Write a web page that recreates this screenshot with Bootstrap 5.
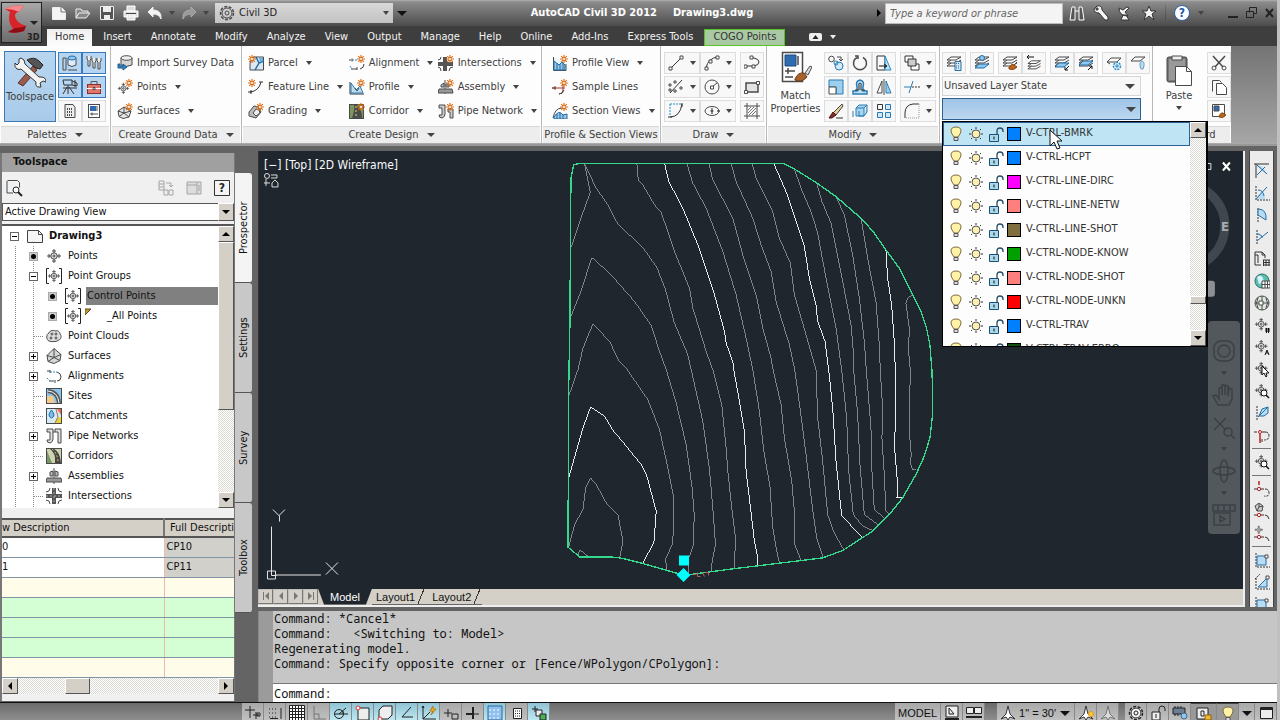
<!DOCTYPE html>
<html lang="en">
<head>
<meta charset="utf-8">
<meta name="viewport" content="width=device-width, initial-scale=1">
<title>AutoCAD Civil 3D 2012 - Drawing3.dwg</title>
<link href="https://cdn.jsdelivr.net/npm/bootstrap@5.3.0/dist/css/bootstrap.min.css" rel="stylesheet">
<style>
  :root { --edge:#646464; --canvas:#1f262e; --ink:#404040; --blue:#b5d5f3; }
  body { font:11px/16px "DejaVu Sans Condensed","DejaVu Sans",sans-serif; color:#111; background:var(--edge); }
  button, select, input { font:inherit; color:inherit; border:0; padding:0; background:none; border-radius:0; }
  svg { display:block; flex:none; }
  .ic { width:16px; height:16px; fill:none; stroke:#4a4a4a; stroke-width:1; }
  .caret { width:0; height:0; border:3px solid transparent; border-top:4px solid #444; border-bottom:0; flex:none; }
  .caret-lg { border-width:5px 5px 0; }
  .shell { border-right:3px solid #c0c0c0; }

  /* title bar and tabs */
  .topbar { background:linear-gradient(#b0b0b0 0,#8b8b8b 2px,#5c5c5c 20px,#4c4c4c 26px); height:26px; }
  .tabbar { background:#3e3e3e; height:20px; color:#f2f2f2; }
  .appbtn { left:1px; top:2px; width:41px; height:41px; background:linear-gradient(#a8a8a8,#6c6c6c); border:1px solid #222; z-index:2; }
  .quick { margin-left:51px; gap:8px; }
  .quick .ic { stroke:#eee; }
  .wsel { width:178px; height:20px; background:linear-gradient(#d8d8d8,#c2c2c2); color:#222; }
  .find { width:178px; height:21px; background:#f4f4f4; padding-left:4px; font-style:italic; border:1px solid #bbb; }
  .find::placeholder { color:#666; opacity:1; }
  .info { gap:8px; padding:0 3px 0 6px; }
  .tabbar ul { margin-left:47px; gap:3px; padding-top:3px; }
  .tabbar a { display:block; padding:0 8px; height:17px; line-height:15px; color:#f2f2f2; text-decoration:none; }
  .tabbar a.on { background:linear-gradient(#eee,#fdfdfd); color:#333; }
  .tabbar a.ctx { background:#a9c8a4; border:1px solid #58c322; color:#333; line-height:13px; }

  /* ribbon */
  .ribbon { background:#fdfdfd; color:var(--ink); height:98px; border-bottom:1px solid #aaa; }
  .pane { border-right:1px solid #b9b9b9; }
  .pane-main { height:80px; padding:5px 4px 0; }
  .pane-name { height:17px; background:#ededed; border-top:1px solid #d8d8d8; gap:8px; margin:0 1px; }
  .pane-name .caret { border-width:4px 4px 0; }
  .rb { height:24px; display:flex; align-items:center; gap:4px; white-space:nowrap; }
  .rb .caret { margin-left:4px; }
  .sq { height:22px; width:24px; border:1px solid #ddd; background:#f8f8f8; display:flex; align-items:center; justify-content:center; }
  .sq.on { background:#b5d5f3; border-color:#3a7ab8; }
  .split { width:36px; justify-content:space-around; }
  .pad { display:grid; gap:2px 0; align-content:start; padding-top:1px; }
  .big { width:53px; height:71px; line-height:13px; }
  .big.on { background:linear-gradient(#b9d5ef,#a9cbea); border:1px solid #3a7ab8; }
  .lstate { width:199px; height:20px; border:1px solid #d5d5d5; background:#f8f8f8; padding:0 5px 0 1px; }
  .lcombo { width:199px; height:22px; border:1px solid #2f6190; background:linear-gradient(#9fc3e6,#bcd8f1); padding-right:4px; }
  .spare { background:linear-gradient(#747474,#a6a6a6); }

  /* layer list */
  .layers { left:2px; top:75px; width:266px; height:226px; border:1px solid #000; border-right-width:2px; background:#fdfdfd; z-index:5; overflow:hidden; }
  .layers li button { width:100%; height:24px; display:flex; align-items:center; padding:0 0 0 4px; color:#333; border:1px solid transparent; }
  .layers li button span { padding-bottom:2px; margin-left:5px; }
  .layers li button.on { background:#bfe5f5; border-color:#2c5f92; }
  .layers i { width:14px; height:14px; border:1px solid #000; flex:none; margin-left:3px; }
  .c-blue { background:#007fff; } .c-mag { background:#f0f; } .c-pink { background:#ff7f7f; }
  .c-olive { background:#7f6f3f; } .c-green { background:#00a000; } .c-red { background:#f00; } .c-dark { background:#105010; }
  .track { background:repeating-conic-gradient(#fff 0 25%,#dcdad5 0 50%) 0 0/2px 2px; }
  .knob { background:#d4d0c8; border:1px solid #fff; border-right-color:#555; border-bottom-color:#555; width:16px; height:16px; display:flex; align-items:center; justify-content:center; flex:none; }
  .up, .dn, .lf, .rt { width:0; height:0; border:4px solid transparent; }
  .up { border-bottom-color:#000; border-top:0; } .dn { border-top-color:#000; border-bottom:0; }
  .lf { border-right-color:#000; border-left:0; } .rt { border-left-color:#000; border-right:0; }

  /* toolspace */
  .tspace { width:258px; padding-top:7px; border-top:2px solid #999; }
  .tpanel { width:235px; background:#f0f0f0; border:solid #777; border-width:0 1px 0 2px; height:548px; overflow:hidden; }
  .tpanel h2 { font-size:11px; line-height:18px; height:19px; background:#a0a0a0; margin:0; padding-left:11px; font-weight:bold; }
  .ttools { height:31px; padding:0 4px 0 2px; }
  .drawsel { appearance:none; width:100%; height:18px; background:#fff; padding-left:2px; border:1px solid #555; border-right:0; }
  .tree { height:284px; background:#fff; border-top:2px solid #555; margin-top:3px; overflow:hidden; }
  .tree ul { list-style:none; margin:0; padding:0; }
  .tree li > div { display:flex; align-items:center; height:20px; }
  .tree li > div > span { margin-left:6px; }
  .tree .l1 { padding-left:8px; } .tree .l2 { padding-left:27px; } .tree .l3 { padding-left:46px; }
  .kids { background:linear-gradient(#888 50%,transparent 0) 13px 0/1px 2px repeat-y; }
  .sub { background:linear-gradient(#888 50%,transparent 0) 31px 0/1px 2px repeat-y; }
  .box { width:9px; height:9px; border:1px solid #666; background:#fff; position:relative; margin-right:8px; flex:none; }
  .box::before { content:""; position:absolute; left:1px; right:1px; top:3px; height:1px; background:#000; }
  .box.plus::after { content:""; position:absolute; top:1px; bottom:1px; left:3px; width:1px; background:#000; }
  .box.dot { background:#ccc; border-color:#aaa; }
  .box.dot::before { left:1px; top:1px; width:5px; height:5px; border-radius:50%; }
  .box.none { background:none; border-color:transparent; }
  .box.none::before { left:4px; right:-6px; height:1px; background:repeating-linear-gradient(90deg,#888 0 1px,transparent 1px 2px); }
  .tree li > div > .sel { background:#808080; flex-grow:1; height:18px; line-height:18px; padding-left:1px; margin-left:5px; }
  .plist { width:100%; border-collapse:collapse; border-top:2px solid #555; table-layout:fixed; }
  .plist th, .plist td { height:20px; padding:0; border-bottom:1px solid #7f94a4; white-space:nowrap; overflow:hidden; font-weight:normal; line-height:18px; }
  .plist th { background:#d4d0c8; border-bottom:2px solid #555; height:18px; line-height:16px; }
  .plist th + th { padding-left:5px; border-left:2px solid #777; }
  .plist td + td { background:#d2d0cb; padding-left:2px; border-left:1px solid #ecb9b0; }
  .plist .ye td { background:#fffdea; } .plist .gr td { background:#d4ffd5; } .plist td { background:#fff; }
  .vtab { writing-mode:vertical-rl; transform:rotate(180deg); width:17px; height:110px; background:#c8c8c8; border-top:1px solid #555; border-radius:3px 0 0 3px; text-align:center; line-height:16px; }
  .vtab.on { background:#f4f4f4; }

  /* drawing window */
  .view { background:var(--canvas); border-left:1px solid #333; overflow:hidden; }
  .vlabel { left:5px; top:6px; font-size:12px; }
  .win { border-right:2px solid #eee; border-bottom:2px solid #eee; }
  .mtabs { height:17px; background:#d4d0c8; }
  .mtabs .nv { width:15px; height:15px; border:1px solid #bbb; border-right-color:#777; border-bottom-color:#777; display:flex; align-items:center; justify-content:center; }
  .mt { height:16px; position:relative; padding:0 6px; line-height:16px; border-bottom:1px solid #666; font-family:"Liberation Sans",sans-serif; color:#111; background:none; }
  .mt.on { background:var(--canvas); color:#fff; padding:0 12px; clip-path:polygon(0 0,100% 0,calc(100% - 6px) 100%,6px 100%); }
  .mt.sl { padding-right:11px; background:linear-gradient(112deg,transparent calc(100% - 8px),#333 0 calc(100% - 7px),transparent 0); }
  .nav3 { right:3px; top:170px; width:32px; height:213px; background:#53585c; border-radius:4px; padding-top:18px; }
  .nav3 .ic { width:24px; height:24px; stroke:#3b4045; stroke-width:1.5; }
  .nav3 .caret { border-top-color:#3b4045; }
  .side { width:25px; background:#ececec; border:1px solid #444; border-width:0 1px; margin-left:4px; margin-right:3px; overflow:hidden; }
  .side button { height:22px; flex:none; }
  .side hr { margin:2px 2px; width:19px; height:1px; border:0; background:#777; opacity:1; flex:none; }
  .grip { height:7px; margin:1px 4px; background:radial-gradient(#222 40%,transparent 0) 0 0/2px 2px; flex:none; }

  /* command line and status bar */
  .cmd { height:92px; background:#c6c6c6; margin-top:4px; border-left:1px solid #888; overflow:hidden; }
  .cmdgrip { width:14px; background:#9b9b9b; }
  .cmd pre, .cmd input { font:12px/15px "Noto Sans Mono","Liberation Mono",monospace; margin:0; color:#111; }
  .cmd pre { height:73px; border-bottom:1px solid #777; padding-left:1px; overflow:hidden; }
  .cmd label { background:#fff; font:12px/15px "Noto Sans Mono","Liberation Mono",monospace; height:19px; padding:2px 0 0 1px; }
  .status { height:18px; border-top:1px solid #111; background:linear-gradient(#6a6a6a,#8e8e8e); overflow:hidden; flex:none; }
  .st { width:22px; height:20px; border-right:1px solid #888; background:linear-gradient(#a9a9a9,#c4c4c4); display:flex; align-items:center; justify-content:center; flex:none; }
  .st .ic { stroke:#222; }
  .st.on { background:linear-gradient(#8fc3d4,#c6eef6); }
  .st.in { background:#999; border-top:1px solid #444; }
  .txt { width:auto; font-family:"Liberation Sans",sans-serif; padding:0 3px; }
</style>
</head>
<body class="vh-100 overflow-hidden">

<svg width="0" height="0" class="position-absolute" aria-hidden="true">
  <defs>
    <g id="spark" stroke="#d9701b" stroke-width="1.2"><path d="M12 0v8M8 4h8M9.2 1.2l5.6 5.6M14.800 1.200l-5.600 5.600"/><circle cx="12" cy="4" r="1" fill="#fff" stroke="none"/></g>
    <g id="pt"><path d="M8 1v4M8 11v4M1 8h4M11 8h4M6 3h4M6 13h4M3 6v4M13 6v4"/><circle cx="8" cy="8" r="3.200" fill="#ddd"/><circle cx="8" cy="8" r="1"/></g>
    <symbol id="point" viewBox="0 0 16 16"><use href="#pt"/></symbol>
    <symbol id="pgroup" viewBox="0 0 16 16"><path d="M3 .5H.5v15H3M13 .5h2.500v15H13" stroke="#222"/><g transform="translate(1 1) scale(.87)"><use href="#pt"/></g></symbol>
    <symbol id="npoint" viewBox="0 0 16 16"><g transform="translate(0 3) scale(.8)"><use href="#pt"/></g><use href="#spark"/></symbol>
    <symbol id="surf" viewBox="0 0 16 16"><path d="M8 .5l7 6-1 6-6 3-6-2-1-6z" fill="#d4d8d6"/><path d="M8 .5v9M8 9.500l7-3M8 9.500l-6 4M8 9.500l6 3M8 9.500L1 7.500"/></symbol>
    <symbol id="nsurf" viewBox="0 0 16 16"><path d="M1 8l6-4 7 4-2 6-6 1.500-4-2z" fill="#e6e6e6"/><path d="M7 4v6l5 4M1 8l6 2-5 3.500M7 10l7-2"/><use href="#spark"/></symbol>
    <symbol id="cloud" viewBox="0 0 16 16"><path d="M3 5C4 2 8 2 9 3c3-1 5 1 5 3 2 2 1 5-1 6-2 2-8 2-10 1C0 12 0 6 3 5z" fill="#ddd"/><circle cx="6" cy="6" r="1"/><circle cx="10" cy="6" r="1"/><circle cx="5" cy="10" r="1"/><circle cx="10" cy="10" r="1"/></symbol>
    <symbol id="align" viewBox="0 0 16 16"><path d="M1 3h3M3 13h5M11 13q4 0 4-4t-4-5" stroke="#444"/><path d="M4 4h7M1 10l3 3" stroke="#2b8cc4" stroke-dasharray="2 1"/><path d="M4 2v3M9 12v3"/></symbol>
    <symbol id="nalign" viewBox="0 0 16 16"><path d="M0 5h2M2 14h6M11 14q4-1 4-5" stroke="#444"/><path d="M3 5h5M1 11l2 3" stroke="#2b8cc4" stroke-dasharray="2 1"/><path d="M3 3.500v3M8 12v3"/><use href="#spark"/></symbol>
    <symbol id="site" viewBox="0 0 16 16"><rect x=".5" y=".5" width="15" height="15" fill="#8cc3ea"/><path d="M1 8h6l2 7H1z" fill="#f2cc8c" stroke="none"/><path d="M2 3q10 1 11 12" stroke-width="4" stroke="#555"/><path d="M2 3q10 1 11 12" stroke="#fff"/></symbol>
    <symbol id="catch" viewBox="0 0 16 16"><rect x=".5" y=".5" width="15" height="15" fill="#d5ecf8"/><path d="M11 1h4v6z" fill="#e86c50" stroke="none"/><path d="M9 15l2-5 4-1v6z" fill="#e2d33b" stroke="none"/><path d="M5.500 2q5 6 0 8-5-2 0-8z" fill="#7dbbe8" stroke="#246da4"/><path d="M10 1l2 8-3 6" stroke="#bb6a45"/></symbol>
    <symbol id="pipe" viewBox="0 0 16 16"><path d="M1 1h6v10q0 3-3 4-3 0-3-3h3V4H1zM9 1h6v14h-3V4H9z" fill="#dedede"/><path d="M7 4h2"/></symbol>
    <symbol id="npipe" viewBox="0 0 16 16"><path d="M1 2h6v9q0 3-3 4-3 0-3-3h3V5H1zM10 6h5v9h-3V9h-2z" fill="#ccc"/><use href="#spark"/></symbol>
    <symbol id="corr" viewBox="0 0 16 16"><rect x=".5" y=".5" width="15" height="15" fill="#cdd2b0"/><path d="M4 1q6 4 5 14h6Q14 4 8 1z" fill="#444" stroke="none"/><path d="M1 1v14h5L1 3z" fill="#76995f" stroke="none"/><path d="M6 1q6 5 6 14" stroke="#e4d75b" stroke-dasharray="2 2"/></symbol>
    <symbol id="ncorr" viewBox="0 0 16 16"><rect x=".5" y="1.500" width="14" height="14" fill="#7a965e"/><path d="M5 2q1 5-2 13h10Q13 6 8 2z" fill="#4b4b4b" stroke="none"/><path d="M7 3v12" stroke="#e4d75b" stroke-dasharray="2 2"/><use href="#spark"/></symbol>
    <symbol id="asm" viewBox="0 0 16 16"><path d="M8 0v16"/><path d="M4 4l3-1v5H4zM9 3l3 1v4H9z" fill="#bbb"/><path d="M1 10h14l1 4H0z" fill="#999"/></symbol>
    <symbol id="nasm" viewBox="0 0 16 16"><path d="M7 1v14M3 6l3-2v4H3zM8 5h3v3H8z" fill="#9cc3dc"/><path d="M1 10h13l1 4H0z" fill="#999"/><use href="#spark"/></symbol>
    <symbol id="inter" viewBox="0 0 16 16"><path d="M8 0v16M0 8h16" stroke="#555" stroke-width="4"/><path d="M8 0v16M0 8h16" stroke="#aaa" stroke-dasharray="2 2"/><path d="M4 0q0 4-4 4M12 0q0 4 4 4M4 16q0-4-4-4M12 16q0-4 4-4"/></symbol>
    <symbol id="ninter" viewBox="0 0 16 16"><path d="M7 2v14M0 9h15" stroke="#555" stroke-width="4"/><path d="M3 2q0 3-3 3M3 16q0-4-3-4M11 16q0-4 4-4"/><use href="#spark"/></symbol>
    <symbol id="dwg" viewBox="0 0 16 16"><path d="M.5 2.500h11l4 4v8H.5z" fill="#f4f4f4" stroke="#444"/><path d="M11.500 2.500v4h4" stroke="#444"/></symbol>
    <symbol id="import" viewBox="0 0 16 16"><path d="M4 3v7q5 3 11 0V3" fill="#d5d5d5"/><ellipse cx="9.500" cy="3" rx="5.500" ry="2.300" fill="#eee"/><path d="M1 9v4h5v2l4-3-4-3v2H3V9z" fill="#2f86c6" stroke="#205c8c"/></symbol>
    <symbol id="parcel" viewBox="0 0 16 16"><path d="M5 2h10.500v13H2V8z" fill="#dce9f2"/><path d="M8 2l3 6-4 7M11 8l5-2" stroke="#246da4" stroke-width="1.500"/><path d="M11 3h4v3l-3 1z" fill="#63b2e2" stroke="none"/><g transform="translate(-8 0)"><use href="#spark"/></g></symbol>
    <symbol id="fline" viewBox="0 0 16 16"><path d="M2 13q9-1 11-10M11 3h4M3 11v4M0 13h4" stroke="#333"/><g transform="translate(-8 0)"><use href="#spark"/></g></symbol>
    <symbol id="grade" viewBox="0 0 16 16"><path d="M1 9l5-6 5 1 2 5-5 6-7-2z" fill="#bbb"/><path d="M5 10l3-4 3 1 1 3-4 3z" fill="#eee"/><use href="#spark"/></symbol>
    <symbol id="profile" viewBox="0 0 16 16"><path d="M1 3v12h14" stroke="#333"/><path d="M2 4l5 7 4-4 3 7H2z" fill="#bcdcf0" stroke="#2b7cb4"/><path d="M6 9l2 3 2-3"/><use href="#spark"/></symbol>
    <symbol id="pview" viewBox="0 0 16 16"><path d="M1.500 2v13.500H14V9" fill="#e8f2f9"/><path d="M2 6l5 4 3-3 3 3v5H2z" fill="#9ac7e6" stroke="#246da4"/><path d="M5 8v7M8 9v6M11 8v7" stroke="#246da4"/><use href="#spark"/></symbol>
    <symbol id="sline" viewBox="0 0 16 16"><path d="M0 9h13M3 7v4M11 5v6q0 4-4 4" stroke="#a33"/><path d="M0 9h4M7 15q4 0 5-4" stroke="#444"/><use href="#spark"/></symbol>
    <symbol id="sview" viewBox="0 0 16 16"><path d="M1 15q2-10 9-10" stroke="#444"/><path d="M2 14q5-8 9-2l4-1v5H2z" fill="#9ac7e6" stroke="#246da4"/><path d="M5 11v5M8 10v6M11 12v4" stroke="#246da4"/><use href="#spark"/></symbol>
    <symbol id="tools" viewBox="0 0 32 32"><path d="M19 10l4 4L9 30l-5-3z" fill="#9b5a4c" stroke="#533"/><path d="M13 4q7-4 12 1l4 4-3 4-4-1-6-5z" fill="#555" stroke="#222"/><path d="M5 3v4L3 9 1 7q-1 4 2 6 2 1 4 0l15 13q-1 5 3 5l2 0-1-4 3-2 3 1q0-5-5-5l-2 0L11 8q0-5-4-6z" fill="#f3f3f3" stroke="#333"/></symbol>
    <symbol id="psp" viewBox="0 0 16 16"><path d="M1 3h3v12H1zM6 15h9"/><path d="M6 3v7q4 3 8 0V3" fill="#def"/><ellipse cx="10" cy="3" rx="4" ry="2" fill="#8ec7ef" stroke="#246da4"/></symbol>
    <symbol id="wrn" viewBox="0 0 16 16"><path d="M1 1v3l1 1v6h2V5l1-1V1M6 3v3l1 1v6h2V7l1-1V3M11 3v3l1 1v7h2V7l1-1V3" fill="#eee"/></symbol>
    <symbol id="theo" viewBox="0 0 16 16"><path d="M1 1h9v5H2zM10 2l5 2v3l-5-1M6 6v9M5 8l-4 7M7 8l5 7M1 9h14M13 1v7" stroke="#333"/></symbol>
    <symbol id="tbox" viewBox="0 0 16 16"><path d="M5 5V2.500h6V5" stroke="#555"/><rect x="1.500" y="5.500" width="13" height="9" fill="#e0776b" stroke="#8c2f28"/><path d="M1 9.500h14" stroke="#fff"/><path d="M7 8.500h2v2H7z" fill="#fff"/></symbol>
    <symbol id="calc" viewBox="0 0 16 16"><path d="M3 1.500h8l2 3v10H3z" fill="#eee"/><path d="M5 6h5M5 9h5M5 12h5" stroke-dasharray="1 1" stroke-width="2"/></symbol>
    <symbol id="props" viewBox="0 0 16 16"><rect x="2.500" y="1.500" width="11" height="13" fill="#fff"/><path d="M4 3h6v5H4z" fill="#2f6bb0" stroke="none"/><path d="M11 3v5M4 11h8M6 9.500v3"/></symbol>
    <symbol id="match" viewBox="0 0 32 36"><rect x="2.500" y="1.500" width="20" height="29" fill="#fff" stroke-width="1.500"/><path d="M5 4h11v11H5z" fill="#2f6bb0" stroke="#1d4a80"/><path d="M18 5v9M5 20h10M8 17v6M5 26h8" stroke-width="1.500"/><path d="M25 22l5-7 2 1-4 8z" fill="#ddd"/><path d="M15 28q3-7 9-6l3 4q-5 6-12 3z" fill="#a8632a" stroke="#6c3a12"/></symbol>
    <symbol id="line" viewBox="0 0 16 16"><path d="M3 13L13 3" stroke="#333"/><path d="M1 12h3v3H1zM12 1h3v3h-3z" fill="#fff"/></symbol>
    <symbol id="arc" viewBox="0 0 16 16"><path d="M2 13Q4 3 14 2" stroke="#333"/><path d="M1 12h3v3H1zM5 5h3v3H5zM12 1h3v3h-3z" fill="#fff"/></symbol>
    <symbol id="pline" viewBox="0 0 16 16"><path d="M2 11h8q5-1 5-4t-5-4H8" stroke="#333"/><path d="M0 10h3v3H0zM8 10h3v3H8zM6 1h3v3H6z" fill="#fff"/></symbol>
    <symbol id="divide" viewBox="0 0 16 16"><path d="M2 14L14 1" stroke="#333"/><path d="M1 5h2v2H1zM6 2h2v2H6zM6 11h2v2H6zM12 8h2v2h-2zM1 10h2v2H1z"/></symbol>
    <symbol id="circ" viewBox="0 0 16 16"><circle cx="8" cy="8" r="7"/><path d="M8 8l5-4"/><path d="M6.500 7h3v3h-3z" fill="#fff"/></symbol>
    <symbol id="rect" viewBox="0 0 16 16"><path d="M2 4h12v9H2z" fill="#e4e4e4" stroke-width="1.500"/><path d="M.5 11.500h3v3h-3zM12.500 2.500h3v3h-3z" fill="#fff"/></symbol>
    <symbol id="filletd" viewBox="0 0 16 16"><path d="M2 1h12M2 1v12" stroke="#2b8cc4" stroke-dasharray="2 1"/><path d="M2 14q10 0 12-13M0 14h4M14 0v4" stroke="#333"/></symbol>
    <symbol id="ell" viewBox="0 0 16 16"><ellipse cx="8" cy="8" rx="7" ry="4.500"/><path d="M8 5v6M6.500 8h3M13 8h3" stroke="#222"/></symbol>
    <symbol id="hatch" viewBox="0 0 16 16"><path d="M3 0v16M13 0v16M0 3h16M0 13h16"/><path d="M4 7l3-3M4 10l6-6M5 12l7-7M8 12l4-4" stroke="#777"/></symbol>
    <symbol id="copy" viewBox="0 0 16 16"><circle cx="3.500" cy="4" r="2.800"/><circle cx="11" cy="11" r="4" stroke="#2b7cb4" fill="#d4eafa"/><circle cx="8" cy="8" r="2" stroke="#2b7cb4"/><path d="M9 2h4v3M11 4l2 2 2-2"/></symbol>
    <symbol id="rot" viewBox="0 0 16 16"><path d="M11 2.500a6.500 6.500 0 1 1-6 0M3 1h3v3" stroke-width="1.500"/></symbol>
    <symbol id="stretch" viewBox="0 0 16 16"><path d="M1 1h8v14H1z" stroke="#333"/><path d="M9 1l6 14H9z" fill="#bfe0f5" stroke="#2b8cc4"/><path d="M3 11h7M8 9l3 2-3 2" stroke="#111"/></symbol>
    <symbol id="scale" viewBox="0 0 16 16"><path d="M1 1h14v14H8V8H1z" fill="#9dd0ee" stroke="#2b7cb4"/><path d="M1 8h7v7H1z" fill="#fff"/></symbol>
    <symbol id="offset" viewBox="0 0 16 16"><path d="M1 12h4V8q-2-6 3-7 5 1 3 7v4h4v3H1z" fill="#bfe0f5" stroke="#2b7cb4" stroke-width="1.500"/><path d="M3 11h4V7q-1-3 1-3t1 3v4h4" stroke="#333"/></symbol>
    <symbol id="mirror" viewBox="0 0 16 16"><path d="M6 2v12H1z"/><path d="M10 2v12h5z" fill="#9dd0ee" stroke="#2b7cb4"/><path d="M8 0v16"/></symbol>
    <symbol id="erase" viewBox="0 0 16 16"><path d="M14 1l1 2-7 9-3-2z" fill="#e9cf98" stroke="#444"/><path d="M5 9l3 3-4 3H1z" fill="#7c3326" stroke="#512"/><path d="M8 15h7" stroke="#333"/></symbol>
    <symbol id="explode" viewBox="0 0 16 16"><path d="M4 5h8v8H4zM4 5l3-3h8l-3 3M12 13l3-4V2" fill="#a9d5ef" stroke="#2b7cb4"/><path d="M1 8v6M7 8v5h5" stroke="#2b7cb4"/></symbol>
    <symbol id="array" viewBox="0 0 16 16"><path d="M1.500 1.500h5v5h-5z" stroke="#333"/><path d="M9.500 1.500h5v5h-5zM1.500 9.500h5v5h-5zM9.500 9.500h5v5h-5z" stroke="#2b7cb4" fill="#cfe8f8"/></symbol>
    <symbol id="order" viewBox="0 0 16 16"><path d="M1 1h8v6H1zM7 9h8v6H7z" fill="#fff" stroke="#333"/><path d="M4 4h8v7H4z" fill="#ccc" stroke="#333"/></symbol>
    <symbol id="trim" viewBox="0 0 16 16"><path d="M9 2L5 14M0 8h7" stroke="#2b7cb4"/><path d="M8 8h8" stroke="#333" stroke-dasharray="2 1"/></symbol>
    <symbol id="fillet" viewBox="0 0 16 16"><path d="M1 15V10Q1 2 9 1h6" stroke="#333"/><path d="M15 1v14H1" stroke="#999" stroke-dasharray="1 1"/></symbol>
    <g id="sheets"><path d="M5 8l-4 3h9l5-3M5 5L1 8h9l5-3" stroke="#444"/><path d="M5 2h10l-5 3H1z" fill="#fff" stroke="#444"/></g>
    <symbol id="ly1" viewBox="0 0 16 16"><use href="#sheets"/><path d="M9 6.500h6v9H9z" fill="#d5e7f5" stroke="#246da4"/><path d="M10 8.500h4M10 11h4M10 13h4" stroke="#246da4" stroke-dasharray="1 1"/></symbol>
    <symbol id="ly2" viewBox="0 0 16 16"><use href="#sheets"/><path d="M5 9h10l-5 4H1z" fill="#8ec7ef" stroke="#246da4"/><circle cx="8" cy="3" r="2.500" fill="#8ec7ef" stroke="#246da4"/></symbol>
    <symbol id="ly3" viewBox="0 0 16 16"><use href="#sheets"/><path d="M7 12q3-4 5-2l3 2q-3 4-8 2z" fill="#b9651f" stroke="#8a4a14"/><path d="M12 10l3-3"/></symbol>
    <symbol id="ly4" viewBox="0 0 16 16"><g transform="translate(1 4) scale(.9)"><use href="#sheets"/></g><path d="M8 2H1M3 0L1 2l2 2" stroke="#111"/></symbol>
    <symbol id="ly5" viewBox="0 0 16 16"><use href="#sheets"/><path d="M5 8h10l-5 4H1z" fill="#8ec7ef" stroke="#246da4"/><path d="M15 11l-4 4M11 12v3h3" stroke="#111"/></symbol>
    <symbol id="ly6" viewBox="0 0 16 16"><use href="#sheets"/><path d="M5 6h10l-5 4H1z" fill="#8ec7ef" stroke="#246da4"/><path d="M10 15l4-4M11 11h3v3" stroke="#111"/></symbol>
    <symbol id="ly7" viewBox="0 0 16 16"><path d="M5 3h10l-4 4H1z"/><path d="M1 7l3 2"/><circle cx="11" cy="11" r="3.500" fill="#e4f3fc" stroke="#2b8cc4" stroke-width="1.500" stroke-dasharray="2 1"/><path d="M11 9v4M9 11h4" stroke="#2b8cc4"/></symbol>
    <symbol id="ly8" viewBox="0 0 16 16"><path d="M5 2h10l-5 4H1z"/><path d="M10 8q2-4 4 0v3l-1 3h-2l-1-3z" fill="#b9dcf2" stroke="#6a9fc8"/></symbol>
    <symbol id="paste" viewBox="0 0 28 32"><rect x="2" y="3" width="20" height="25" rx="2" fill="#777" stroke="#444"/><path d="M4 5h16v21H4z" fill="#999" stroke="none"/><path d="M7 2h10v4H7z" fill="#eee"/><path d="M10.500 12.500h11l5 5v14h-16z" fill="#fff"/><path d="M21.500 12.500v5h5"/></symbol>
    <symbol id="cut" viewBox="0 0 16 16"><path d="M2 1l10 11M14 1L4 12" stroke-width="1.500"/><circle cx="3" cy="13" r="2"/><circle cx="13" cy="13" r="2"/></symbol>
    <symbol id="cpy" viewBox="0 0 16 16"><path d="M1.500 12.500v-11h7l2 2" /><path d="M5.500 4.500h6l4 4v7h-10z" fill="#fff"/></symbol>
    <symbol id="pspec" viewBox="0 0 16 16"><path d="M1.500 1.500h12v12h-12z" fill="#fff"/><path d="M3 3h5v5H3z" fill="#2f6bb0"/><path d="M8 13q2-4 4-3l3 2q-3 4-7 2z" fill="#b9651f" stroke="#8a4a14"/></symbol>
    <symbol id="bulb" viewBox="0 0 16 16"><path d="M8 1q5 0 5 4 0 2-3 6H6Q3 7 3 5q0-4 5-4z" fill="#fff3a8" stroke="#7a6a3a"/><path d="M6 11.500h4v3H6z" fill="#ddd" stroke="#555"/></symbol>
    <symbol id="sun" viewBox="0 0 16 16"><path d="M8 1v2M8 13v2M1 8h2M13 8h2M3 3l1 1M12 12l1 1M13 3l-1 1M4 12l-1 1" stroke="#333"/><circle cx="8" cy="8" r="4" fill="#fff0b0" stroke="#555"/></symbol>
    <symbol id="lock" viewBox="0 0 16 16"><path d="M9 8V5q0-3 3-3t3 3v1" stroke="#244a66" stroke-width="1.300"/><path d="M1.500 8.500h9v7h-9z" fill="#a9d9ef" stroke="#1d4e70"/><path d="M6 10.500v3" stroke="#111"/></symbol>
    <symbol id="gear" viewBox="0 0 16 16"><circle cx="8" cy="8" r="6.500" stroke-dasharray="3 1.500" stroke-width="1.500"/><circle cx="8" cy="8" r="5"/><circle cx="8" cy="8" r="2"/></symbol>
    <symbol id="ann" viewBox="0 0 16 16"><path d="M8 1l2 8 5 5-5-2-2 3-2-3-5 2 5-5z" fill="#fff" stroke="#333"/></symbol>
    <symbol id="curve" viewBox="0 0 16 16"><path d="M0 5h4M8 5h3M11 5q4 0 4 4t-5 4M8 12v3" stroke="#333" stroke-dasharray="3 1"/><circle cx="6" cy="5" r="1.500" stroke="#b22"/><path d="M6 7v9" stroke="#b22" stroke-width="1.500"/></symbol>
    <symbol id="sta" viewBox="0 0 16 16"><path d="M0 8h3M7 8h3M11 8q4 0 4 4t-5 3" stroke="#333" stroke-dasharray="3 1"/><circle cx="5" cy="8" r="1.700" stroke="#b22"/><path d="M5 0v4" stroke="#b22" stroke-width="1.500"/></symbol>
    <symbol id="sta2" viewBox="0 0 16 16"><path d="M5 0l4 3-1 5H3L1 3z" fill="#ccc"/><path d="M5 0v4l4-1M5 4l-2 4"/><path d="M0 12h3M7 12h3M11 12q3 0 4 4" stroke="#333"/><circle cx="5" cy="12" r="1.700" stroke="#b22"/></symbol>
    <symbol id="sta3" viewBox="0 0 16 16"><g transform="scale(.6)"><use href="#pt"/></g><path d="M0 12h3M7 12h3M11 12q3 0 4 4" stroke="#333"/><circle cx="5" cy="12" r="1.700" stroke="#b22"/></symbol>
    <symbol id="ang" viewBox="0 0 16 16"><path d="M2 1v14h14" stroke="#333" stroke-dasharray="2 1"/><path d="M7 7q4 1 4 7H2z" fill="#b8dcf3" stroke="none"/><path d="M2 14L13 2M4 5q5 0 6 6" stroke="#246da4"/></symbol>
    <symbol id="ang2" viewBox="0 0 16 16"><path d="M0 1h15M2 1v14" stroke="#333"/><path d="M4 2q7 2 8 9L3 3z" fill="#b8dcf3" stroke="none"/><path d="M11 4L3 12M3 2l10 9" stroke="#246da4"/></symbol>
    <symbol id="deltac" viewBox="0 0 16 16"><path d="M4 1v14" stroke="#333" stroke-dasharray="2 1"/><path d="M4 2q9 0 8 11L4 8z" fill="#b8dcf3" stroke="#246da4"/></symbol>
    <symbol id="defl" viewBox="0 0 16 16"><path d="M3 1v14" stroke="#333" stroke-dasharray="2 1"/><path d="M3 12L14 3M3 5q5 0 5 4" stroke="#246da4" fill="#b8dcf3"/></symbol>
    <symbol id="kite" viewBox="0 0 16 16"><path d="M3 1v14" stroke="#333" stroke-dasharray="2 1"/><path d="M5 11L8 4l6-2v6l-4 3z" fill="#b8dcf3" stroke="#246da4"/><path d="M4 12L14 2" stroke="#246da4"/></symbol>
    <symbol id="sheet" viewBox="0 0 16 16"><path d="M1 1h7l3 3v3M1 1v13h6M8 1v3h3M1 4h3v8" stroke="#333"/><path d="M9 9h7M9 11.500h7M9 14h7M9.500 9v6M12 9v6M15 9v6" stroke="#333"/></symbol>
    <symbol id="globe" viewBox="0 0 16 16"><circle cx="8" cy="8" r="7" fill="#5cc0a9" stroke="#2b6c74"/><path d="M3 4q4-3 6 1T5 11z" fill="#d7f3ff" stroke="none"/><path d="M8 8h8v7H8z" fill="#fff"/><path d="M8 11.500h8M11 8v7M13.500 8v7"/></symbol>
    <symbol id="globe2" viewBox="0 0 16 16"><circle cx="8" cy="8" r="7" fill="#dfe9df"/><path d="M8 1v14M1 8h14M4 3q-3 5 0 10M12 3q3 5 0 10"/><path d="M5 6h4v4H5z" fill="#fff"/></symbol>
    <symbol id="ptn" viewBox="0 0 16 16"><g transform="scale(.9)"><use href="#pt"/></g><path d="M11 12h5M11 14h5M12.500 11v5M14.500 11v5" stroke="#111"/></symbol>
    <symbol id="pta" viewBox="0 0 16 16"><g transform="scale(.9)"><use href="#pt"/></g><path d="M11 16l2-5 2 5M12 14h2" stroke="#111"/></symbol>
    <symbol id="ptc" viewBox="0 0 16 16"><g transform="scale(.9)"><use href="#pt"/></g><path d="M8 5v9l2-2 2 4 1-1-1-3h3z" fill="#fff" stroke="#111"/></symbol>
    <symbol id="ptz" viewBox="0 0 16 16"><g transform="scale(.9)"><use href="#pt"/></g><circle cx="10" cy="10" r="3" fill="#fff" stroke="#111"/><path d="M12 12l3 3" stroke="#111" stroke-width="1.500"/></symbol>
    <symbol id="ortho" viewBox="0 0 16 16"><path d="M2 1v14h14" stroke="#333" stroke-dasharray="2 1"/><path d="M3 4h9v9H3z" fill="#b8dcf3" stroke="#246da4"/><path d="M11 3h3v3h-3z" fill="#fff"/></symbol>
    <symbol id="ortho2" viewBox="0 0 16 16"><path d="M2 4v11h14M1 5l5-5" stroke="#333" stroke-dasharray="2 1"/><path d="M4 13L13 4v9z" fill="#b8dcf3" stroke="#246da4"/><path d="M12 2h3v3h-3z" fill="#fff"/></symbol>
    <symbol id="grid" viewBox="0 0 16 16"><path d="M.5.5h15v15H.5z" fill="#fff"/><path d="M3.500 0v16M6.500 0v16M9.500 0v16M12.500 0v16M0 3.500h16M0 6.500h16M0 9.500h16M0 12.500h16"/></symbol>
  </defs>
</svg>

<div class="shell d-flex flex-column vh-100">

<header class="position-relative">
  <button class="appbtn position-absolute" aria-label="Application menu">
    <svg width="39" height="39" viewBox="0 0 39 39"><path d="M3 6q8-5 19-3l-5 6q-4 0-4 4 1 7 11 10l-2 5q-8 3-16 1l5-3Q5 18 8 9z" fill="#d8232a"/><path d="M3 6q8-5 19-3l-5 6q-6-3-14-3z" fill="#f58a8c"/><path d="M13 25q6 0 11-2l-2 5q-8 3-16 1z" fill="#8e0d13"/><path d="M28 18h8l-4 4z" fill="#222"/><text x="25" y="37" font-size="9" font-weight="bold" fill="#222">3D</text></svg>
  </button>
  <div class="topbar d-flex align-items-center">
    <div class="quick d-flex align-items-center">
      <button aria-label="New"><svg class="ic"><path d="M1.500 2.500h9l4 4v8h-13z" fill="#f4f4f4"/><path d="M10 2v5h5" stroke="#777"/></svg></button>
      <button aria-label="Open"><svg class="ic"><path d="M1 13V4h5l1 2h6v2M1 13l3-5h11l-4 5z" fill="#888"/></svg></button>
      <button aria-label="Save"><svg class="ic"><path d="M1.500 1.500h13v13h-13z" fill="#555"/><path d="M4 2h8v5H4zM5 10h6v4H5z" fill="#eee" stroke="none"/></svg></button>
      <button aria-label="Print"><svg class="ic"><path d="M4 1h8v5H4zM1 6h14v6H1zM4 10h8v5H4z" fill="#ddd" stroke="#fff"/><path d="M3 8.500h10" stroke="#444"/></svg></button>
      <button aria-label="Undo"><svg class="ic"><path d="M6 2v3q9 0 8 9-2-5-8-5v3L1 7z" fill="#f4f4f4"/></svg></button>
      <span class="caret" style="margin:0 -2px"></span>
      <button aria-label="Redo"><svg class="ic"><path d="M10 2v3q-9 0-8 9 2-5 8-5v3l5-5z" fill="#999" stroke="#aaa"/></svg></button>
      <span class="caret" style="margin:0 -2px"></span>
    </div>
    <button class="wsel d-flex align-items-center ms-2 px-1 gap-1"><svg class="ic"><use href="#gear"/></svg>Civil 3D<span class="caret ms-auto"></span></button>
    <span class="caret caret-lg ms-1" style="border-top-color:#111"></span>
    <div class="flex-grow-1 d-flex justify-content-center fw-bold text-white"><span class="me-3">AutoCAD Civil 3D 2012</span><span>Drawing3.dwg</span></div>
    <span class="rt me-1"></span>
    <input class="find" type="search" placeholder="Type a keyword or phrase" aria-label="Search help">
    <div class="info d-flex align-items-center">
      <button aria-label="Search"><svg class="ic" style="stroke:#fff"><path d="M2 8l1-6h3v13H1zM14 8l-1-6h-3v13h5zM6 6h4" fill="#555"/></svg></button>
      <button aria-label="Subscription"><svg class="ic"><path d="M4 1q5-1 5 4l6 7v3h-3L6 8Q1 8 1 4z" fill="#f4f4f4" stroke="#333"/><circle cx="4" cy="4" r="1.200" fill="#444"/></svg></button>
      <button aria-label="Communication"><svg class="ic"><path d="M2 3q0 8 9 8l-3-4 4-4-2-1-4 3zM4 15h8l-3-5H6z" fill="#f4f4f4" stroke="#333"/></svg></button>
      <button aria-label="Favorites"><svg class="ic"><path d="M8 1l2 5h5l-4 3 2 6-5-4-5 4 2-6-4-3h5z" fill="#f4f4f4" stroke="#333"/></svg></button>
      <span class="vr" style="color:#222"></span>
      <button aria-label="Help"><svg class="ic"><circle cx="8" cy="8" r="7.500" fill="#fff" stroke="#2b5fa8"/><text x="8" y="12" font-size="12" font-weight="bold" text-anchor="middle" stroke="none" fill="#2357a5">?</text></svg></button>
      <span class="caret me-3"></span>
      <button aria-label="Minimize"><svg class="ic" style="width:10px;stroke:#222;stroke-width:2"><path d="M0 12h10"/></svg></button>
      <button aria-label="Restore"><svg class="ic" style="width:11px;stroke:#222"><path d="M3.500 7.500v-5h7v6h-3M.500 6.500h7v6h-7z"/></svg></button>
      <button aria-label="Close"><svg class="ic" style="width:9px;stroke:#222;stroke-width:2"><path d="M1 4l7 8M8 4l-7 8"/></svg></button>
    </div>
  </div>
  <nav class="tabbar d-flex align-items-start">
    <ul class="list-unstyled d-flex mb-0">
      <li><a href="#" class="on">Home</a></li><li><a href="#">Insert</a></li><li><a href="#">Annotate</a></li><li><a href="#">Modify</a></li><li><a href="#">Analyze</a></li><li><a href="#">View</a></li><li><a href="#">Output</a></li><li><a href="#">Manage</a></li><li><a href="#">Help</a></li><li><a href="#">Online</a></li><li><a href="#">Add-Ins</a></li><li><a href="#">Express Tools</a></li><li><a href="#" class="ctx">COGO Points</a></li>
    </ul>
    <button class="d-flex align-items-center gap-2 ms-4 mt-1" aria-label="Minimize ribbon"><svg width="13" height="13"><rect y="3" width="13" height="8" rx="2" fill="#eee"/><path d="M3.500 9h6L6.500 5z" fill="#222"/></svg><span class="caret" style="border-top-color:#eee"></span></button>
  </nav>
</header>

<section class="ribbon d-flex">
  <div class="pane" style="width:111px">
    <div class="pane-main d-flex" style="gap:2px">
      <button class="big on d-flex flex-column align-items-center"><svg class="ic" style="width:32px;height:32px;margin:4px 0 2px"><use href="#tools"/></svg>Toolspace</button>
      <div class="pad" style="grid-template-columns:24px 24px">
        <button class="sq on" aria-label="Prospector"><svg class="ic"><use href="#psp"/></svg></button><button class="sq on" aria-label="Settings"><svg class="ic"><use href="#wrn"/></svg></button>
        <button class="sq on" aria-label="Survey"><svg class="ic"><use href="#theo"/></svg></button><button class="sq on" aria-label="Toolbox"><svg class="ic"><use href="#tbox"/></svg></button>
        <button class="sq" aria-label="Calculator"><svg class="ic"><use href="#calc"/></svg></button><button class="sq" aria-label="Properties"><svg class="ic"><use href="#props"/></svg></button>
      </div>
    </div>
    <div class="pane-name d-flex align-items-center justify-content-center">Palettes<span class="caret"></span></div>
  </div>
  <div class="pane" style="width:131px">
    <div class="pane-main" style="padding-left:6px">
      <button class="rb"><svg class="ic"><use href="#import"/></svg>Import Survey Data</button>
      <button class="rb"><svg class="ic"><use href="#npoint"/></svg>Points<span class="caret"></span></button>
      <button class="rb"><svg class="ic"><use href="#nsurf"/></svg>Surfaces<span class="caret"></span></button>
    </div>
    <div class="pane-name d-flex align-items-center justify-content-center">Create Ground Data<span class="caret"></span></div>
  </div>
  <div class="pane" style="width:300px">
    <div class="pane-main d-flex" style="padding-left:6px">
      <div style="width:102px">
        <button class="rb"><svg class="ic"><use href="#parcel"/></svg>Parcel<span class="caret"></span></button>
        <button class="rb"><svg class="ic"><use href="#fline"/></svg>Feature Line<span class="caret"></span></button>
        <button class="rb"><svg class="ic"><use href="#grade"/></svg>Grading<span class="caret"></span></button>
      </div>
      <div style="width:90px">
        <button class="rb"><svg class="ic"><use href="#nalign"/></svg>Alignment<span class="caret"></span></button>
        <button class="rb"><svg class="ic"><use href="#profile"/></svg>Profile<span class="caret"></span></button>
        <button class="rb"><svg class="ic"><use href="#ncorr"/></svg>Corridor<span class="caret"></span></button>
      </div>
      <div>
        <button class="rb"><svg class="ic"><use href="#ninter"/></svg>Intersections<span class="caret"></span></button>
        <button class="rb"><svg class="ic"><use href="#nasm"/></svg>Assembly<span class="caret"></span></button>
        <button class="rb"><svg class="ic"><use href="#npipe"/></svg>Pipe Network<span class="caret"></span></button>
      </div>
    </div>
    <div class="pane-name d-flex align-items-center justify-content-center">Create Design<span class="caret"></span></div>
  </div>
  <div class="pane" style="width:119px">
    <div class="pane-main" style="padding-left:10px">
      <button class="rb"><svg class="ic"><use href="#pview"/></svg>Profile View<span class="caret"></span></button>
      <button class="rb"><svg class="ic"><use href="#sline"/></svg>Sample Lines</button>
      <button class="rb"><svg class="ic"><use href="#sview"/></svg>Section Views<span class="caret"></span></button>
    </div>
    <div class="pane-name text-center text-nowrap">Profile &amp; Section Views</div>
  </div>
  <div class="pane" style="width:106px">
    <div class="pane-main d-flex" style="padding-left:3px">
      <div class="pad" style="grid-template-columns:36px 40px 24px">
        <button class="sq split" aria-label="Line"><svg class="ic"><use href="#line"/></svg><span class="caret"></span></button><button class="sq split" aria-label="Arc"><svg class="ic"><use href="#arc"/></svg><span class="caret"></span></button><button class="sq" aria-label="Polyline"><svg class="ic"><use href="#pline"/></svg></button>
        <button class="sq split" aria-label="Multiple points"><svg class="ic"><use href="#divide"/></svg><span class="caret"></span></button><button class="sq split" aria-label="Circle"><svg class="ic"><use href="#circ"/></svg><span class="caret"></span></button><button class="sq" aria-label="Rectangle"><svg class="ic"><use href="#rect"/></svg></button>
        <button class="sq split" aria-label="Best fit curve"><svg class="ic"><use href="#filletd"/></svg><span class="caret"></span></button><button class="sq split" aria-label="Ellipse"><svg class="ic"><use href="#ell"/></svg><span class="caret"></span></button><button class="sq" aria-label="Hatch"><svg class="ic"><use href="#hatch"/></svg></button>
      </div>
    </div>
    <div class="pane-name d-flex align-items-center justify-content-center">Draw<span class="caret"></span></div>
  </div>
  <div class="pane" style="width:173px">
    <div class="pane-main d-flex px-0">
      <button class="d-flex flex-column align-items-center" style="width:57px;line-height:13px"><svg class="ic" style="width:32px;height:36px;margin-bottom:2px"><use href="#match"/></svg>Match<br>Properties</button>
      <div class="pad" style="grid-template-columns:24px 24px 28px 36px">
        <button class="sq" aria-label="Copy"><svg class="ic"><use href="#copy"/></svg></button><button class="sq" aria-label="Rotate"><svg class="ic"><use href="#rot"/></svg></button><button class="sq" aria-label="Stretch"><svg class="ic"><use href="#stretch"/></svg></button><button class="sq split" aria-label="Draw order"><svg class="ic"><use href="#order"/></svg><span class="caret"></span></button>
        <button class="sq" aria-label="Scale"><svg class="ic"><use href="#scale"/></svg></button><button class="sq" aria-label="Offset"><svg class="ic"><use href="#offset"/></svg></button><button class="sq" aria-label="Mirror"><svg class="ic"><use href="#mirror"/></svg></button><button class="sq split" aria-label="Trim"><svg class="ic"><use href="#trim"/></svg><span class="caret"></span></button>
        <button class="sq" aria-label="Erase"><svg class="ic"><use href="#erase"/></svg></button><button class="sq" aria-label="Explode"><svg class="ic"><use href="#explode"/></svg></button><button class="sq" aria-label="Array"><svg class="ic"><use href="#array"/></svg></button><button class="sq split" aria-label="Fillet"><svg class="ic"><use href="#fillet"/></svg><span class="caret"></span></button>
      </div>
    </div>
    <div class="pane-name d-flex align-items-center justify-content-center">Modify<span class="caret"></span></div>
  </div>
  <div class="pane position-relative" style="width:213px">
    <div class="pane-main d-flex flex-column" style="padding:6px 2px 0;gap:2px">
      <div class="d-flex" style="gap:4px">
        <div><button class="sq" aria-label="Layer properties"><svg class="ic"><use href="#ly1"/></svg></button></div>
        <div><button class="sq" aria-label="Make current"><svg class="ic"><use href="#ly2"/></svg></button></div>
        <div class="d-flex"><button class="sq" aria-label="Match layer"><svg class="ic"><use href="#ly3"/></svg></button><button class="sq" aria-label="Previous layer"><svg class="ic"><use href="#ly4"/></svg></button></div>
        <div class="d-flex"><button class="sq" aria-label="Isolate"><svg class="ic"><use href="#ly5"/></svg></button><button class="sq" aria-label="Unisolate"><svg class="ic"><use href="#ly6"/></svg></button></div>
        <div class="d-flex"><button class="sq" aria-label="Freeze"><svg class="ic"><use href="#ly7"/></svg></button><button class="sq" aria-label="Layer off"><svg class="ic"><use href="#ly8"/></svg></button></div>
      </div>
      <button class="lstate d-flex align-items-center justify-content-between">Unsaved Layer State<span class="caret caret-lg"></span></button>
      <button class="lcombo d-flex align-items-center justify-content-end" aria-label="Layer" aria-expanded="true"><span class="caret caret-lg"></span></button>
    </div>
    <div class="pane-name"></div>
    <div class="layers position-absolute d-flex">
      <ul class="list-unstyled mb-0 flex-grow-1">
        <li><button class="on"><svg class="ic me-1"><use href="#bulb"/></svg><svg class="ic"><use href="#sun"/></svg><svg class="ic ms-1"><use href="#lock"/></svg><i class="c-blue"></i><span>V-CTRL-BMRK</span></button></li>
        <li><button><svg class="ic me-1"><use href="#bulb"/></svg><svg class="ic"><use href="#sun"/></svg><svg class="ic ms-1"><use href="#lock"/></svg><i class="c-blue"></i><span>V-CTRL-HCPT</span></button></li>
        <li><button><svg class="ic me-1"><use href="#bulb"/></svg><svg class="ic"><use href="#sun"/></svg><svg class="ic ms-1"><use href="#lock"/></svg><i class="c-mag"></i><span>V-CTRL-LINE-DIRC</span></button></li>
        <li><button><svg class="ic me-1"><use href="#bulb"/></svg><svg class="ic"><use href="#sun"/></svg><svg class="ic ms-1"><use href="#lock"/></svg><i class="c-pink"></i><span>V-CTRL-LINE-NETW</span></button></li>
        <li><button><svg class="ic me-1"><use href="#bulb"/></svg><svg class="ic"><use href="#sun"/></svg><svg class="ic ms-1"><use href="#lock"/></svg><i class="c-olive"></i><span>V-CTRL-LINE-SHOT</span></button></li>
        <li><button><svg class="ic me-1"><use href="#bulb"/></svg><svg class="ic"><use href="#sun"/></svg><svg class="ic ms-1"><use href="#lock"/></svg><i class="c-green"></i><span>V-CTRL-NODE-KNOW</span></button></li>
        <li><button><svg class="ic me-1"><use href="#bulb"/></svg><svg class="ic"><use href="#sun"/></svg><svg class="ic ms-1"><use href="#lock"/></svg><i class="c-pink"></i><span>V-CTRL-NODE-SHOT</span></button></li>
        <li><button><svg class="ic me-1"><use href="#bulb"/></svg><svg class="ic"><use href="#sun"/></svg><svg class="ic ms-1"><use href="#lock"/></svg><i class="c-red"></i><span>V-CTRL-NODE-UNKN</span></button></li>
        <li><button><svg class="ic me-1"><use href="#bulb"/></svg><svg class="ic"><use href="#sun"/></svg><svg class="ic ms-1"><use href="#lock"/></svg><i class="c-blue"></i><span>V-CTRL-TRAV</span></button></li>
        <li><button><svg class="ic me-1"><use href="#bulb"/></svg><svg class="ic"><use href="#sun"/></svg><svg class="ic ms-1"><use href="#lock"/></svg><i class="c-dark"></i><span>V-CTRL-TRAV-ERRO</span></button></li>
      </ul>
      <div class="track d-flex flex-column justify-content-between"><span class="knob"><b class="up"></b></span><span class="knob" style="height:8px;margin-top:132px"></span><span class="knob"><b class="dn"></b></span></div>
      <svg class="position-absolute" style="left:106px;top:7px" width="14" height="22"><path d="M1 1v16l4-4 3 7 3-1-3-7h5z" fill="#fff" stroke="#111"/></svg>
    </div>
  </div>
  <div style="width:78px">
    <div class="pane-main d-flex justify-content-between px-0">
      <button class="d-flex flex-column align-items-center" style="width:52px;line-height:13px"><svg class="ic" style="width:28px;height:34px;margin:2px 0"><use href="#paste"/></svg>Paste<span class="caret mt-1"></span></button>
      <div class="pad"><button class="sq" aria-label="Cut"><svg class="ic"><use href="#cut"/></svg></button><button class="sq" aria-label="Copy clip"><svg class="ic"><use href="#cpy"/></svg></button><button class="sq" aria-label="Paste special"><svg class="ic"><use href="#pspec"/></svg></button></div>
    </div>
    <div class="pane-name text-center">Clipboard</div>
  </div>
  <div class="spare flex-grow-1"></div>
</section>

<main class="flex-grow-1 d-flex" style="min-height:0">
  <aside class="tspace d-flex align-items-start flex-shrink-0">
    <div class="tpanel">
      <h2>Toolspace</h2>
      <div class="ttools d-flex align-items-center gap-2">
        <button class="me-auto" aria-label="Item preview"><svg class="ic" style="width:20px;height:18px"><path d="M3.500 1.500h10l2 2v5M3 2v12h6" fill="#eef3f6"/><circle cx="12" cy="11" r="3" fill="#fff" stroke="#222"/><path d="M14 13l4 4" stroke="#222" stroke-width="2"/></svg></button>
        <button class="me-1" aria-label="Panorama"><svg class="ic" style="stroke:#a5a5a5"><path d="M1 1h5v9H1zM1 4h5M1 7h5M8 3h5v3M11 5l2 2 2-2M6 10h4v5H6zM11 10h4v5h-4z"/></svg></button>
        <button class="me-1" aria-label="Preview"><svg class="ic" style="stroke:#a5a5a5"><path d="M1 2h14v12H1zM1 5h10M11 2v12M13 5v6" fill="#ddd"/></svg></button>
        <button aria-label="Help"><svg class="ic"><path d="M.5.5h15v15H.5z" fill="#f4f4f4" stroke="#333"/><text x="8" y="12" font-size="12" font-weight="bold" text-anchor="middle" stroke="none" fill="#222">?</text></svg></button>
      </div>
      <div class="d-flex"><select class="drawsel" aria-label="View"><option>Active Drawing View</option></select><span class="knob" style="height:18px"><b class="dn"></b></span></div>
      <div class="tree d-flex">
        <ul class="flex-grow-1">
          <li><div class="l1"><span class="box m-0"></span><svg class="ic" style="margin-left:8px"><use href="#dwg"/></svg><span class="fw-bold">Drawing3</span></div>
          <div class="d-block h-auto kids"><ul class="sub">
            <li><div class="l2"><span class="box dot m-0"></span><svg class="ic ms-2"><use href="#point"/></svg><span>Points</span></div></li>
            <li><div class="l2"><span class="box m-0"></span><svg class="ic ms-2"><use href="#pgroup"/></svg><span>Point Groups</span></div></li>
            <li><div class="l3"><span class="box dot m-0"></span><svg class="ic ms-2"><use href="#pgroup"/></svg><span class="sel">Control Points</span></div></li>
            <li><div class="l3"><span class="box dot m-0"></span><svg class="ic ms-2"><use href="#pgroup"/></svg><svg width="7" height="16" class="ms-1"><path d="M0 1h6L0 7z" fill="#c89830" stroke="#5b4a1c"/></svg><span style="margin-left:15px">_All Points</span></div></li>
            <li><div class="l2"><span class="box none m-0"></span><svg class="ic ms-2"><use href="#cloud"/></svg><span>Point Clouds</span></div></li>
            <li><div class="l2"><span class="box plus m-0"></span><svg class="ic ms-2"><use href="#surf"/></svg><span>Surfaces</span></div></li>
            <li><div class="l2"><span class="box plus m-0"></span><svg class="ic ms-2"><use href="#align"/></svg><span>Alignments</span></div></li>
            <li><div class="l2"><span class="box none m-0"></span><svg class="ic ms-2"><use href="#site"/></svg><span>Sites</span></div></li>
            <li><div class="l2"><span class="box none m-0"></span><svg class="ic ms-2"><use href="#catch"/></svg><span>Catchments</span></div></li>
            <li><div class="l2"><span class="box plus m-0"></span><svg class="ic ms-2"><use href="#pipe"/></svg><span>Pipe Networks</span></div></li>
            <li><div class="l2"><span class="box none m-0"></span><svg class="ic ms-2"><use href="#corr"/></svg><span>Corridors</span></div></li>
            <li><div class="l2"><span class="box plus m-0"></span><svg class="ic ms-2"><use href="#asm"/></svg><span>Assemblies</span></div></li>
            <li><div class="l2"><span class="box none m-0"></span><svg class="ic ms-2"><use href="#inter"/></svg><span>Intersections</span></div></li>
            <li><div class="l2"><span class="box none m-0"></span><svg class="ic ms-2"><use href="#surf"/></svg></div></li>
          </ul></div></li>
        </ul>
        <div class="track d-flex flex-column"><span class="knob"><b class="up"></b></span><span class="knob" style="height:168px"></span><span class="knob mt-auto"><b class="dn"></b></span></div>
      </div>
      <table class="plist" style="margin-top:10px">
        <colgroup><col style="width:162px"><col></colgroup>
        <thead><tr><th>w Description</th><th>Full Description</th></tr></thead>
        <tbody><tr><td>0</td><td>CP10</td></tr><tr><td>1</td><td>CP11</td></tr><tr class="ye"><td></td><td></td></tr><tr class="gr"><td></td><td></td></tr><tr class="gr"><td></td><td></td></tr><tr class="gr"><td></td><td></td></tr><tr class="ye"><td></td><td></td></tr></tbody>
      </table>
      <div class="track d-flex justify-content-between"><span class="knob"><b class="lf"></b></span><span class="knob me-auto" style="width:25px;margin-left:47px"></span><span class="knob"><b class="rt"></b></span></div>
    </div>
    <div class="d-flex flex-column" style="margin-top:20px">
      <button class="vtab on">Prospector</button><button class="vtab">Settings</button><button class="vtab">Survey</button><button class="vtab">Toolbox</button>
    </div>
  </aside>

  <div class="flex-grow-1 d-flex flex-column" style="min-width:0">
    <div class="flex-grow-1 d-flex" style="min-height:0;border-top:2px solid #999;padding-top:5px">
      <div class="win flex-grow-1 d-flex flex-column" style="min-width:0">
        <div class="view flex-grow-1 position-relative" style="min-height:0">
          <svg class="w-100 h-100" viewBox="259 151 984 438" preserveAspectRatio="xMinYMin meet" fill="none">
            <g transform="translate(560 155) scale(.33333)" stroke="#7f858a" stroke-width="3" shape-rendering="crispEdges">
                <path d="M75 28L92 112 60 200 36 275M75 28L110 100 145 150 175 208 250 278 292 338 318 405 343 500 385 600 395 645 430 800 450 945 460 1060 468 1170 458 1220 455 1250"/>
                <path d="M32 490L60 420 97 308 150 355 225 440 275 512 300 590 320 645 350 745 380 870 398 1000 404 1080 402 1170 388 1210 386 1255"/>
                <path d="M28 722L55 645 70 580 100 507 150 560 178 618 203 645 265 735 300 825 325 940 343 1030 340 1165 318 1215 322 1245"/>
                <path d="M232 25L236 75 250 90 285 150 305 172 345 290 390 400 400 460 440 590 460 645 487 750 500 880 505 950 517 1060 528 1150 525 1240"/>
                <path d="M382 25L400 85 440 160 490 290 530 420 560 550 580 645 600 770 612 880 632 1000 640 1120 650 1180 660 1225"/>
                <path d="M448 25L460 75 520 190 550 300 590 420 610 520 635 610 641 645 665 750 675 850 697 980 706 1080 704 1165 725 1218"/>
                <path d="M515 25L530 80 580 190 605 270 635 350 650 440 690 570 706 645 722 760 740 900 758 1050 772 1150 790 1206"/>
                <path d="M578 25L590 70 640 170 660 250 693 325 705 420 740 540 770 645 775 790 790 920 805 1080 822 1130 853 1185"/>
                <path d="M705 42L725 100 755 170 775 235 800 370 830 520 847 645 862 790 868 950 882 1080 910 1115 942 1128"/>
                <path d="M772 84L788 140 815 205 850 380 875 510 883 600 883 645 895 780 902 930 915 1080 955 1110"/>
                <path d="M830 125L855 180 880 300 900 430 915 560 921 645 935 820 938 950 945 1065 975 1090"/>
                <path d="M905 190L925 310 950 440 960 570 963 645 970 760 968 850 975 960 980 1070 990 1077"/>
                <path d="M1060 420L1045 430 1040 445 1050 520 1048 590 1053 645 1050 830 1056 900 1053 925 1060 945 1070 945"/>
                <path d="M27 1178L45 1110 70 1065 78 1000 93 970 110 990 140 1045 175 1080 190 1160 180 1210M55 1205L60 1185 85 1205"/>
                <g stroke="#e8ebee">
                  <path d="M315 25L328 80 370 160 415 270 465 420 495 530 500 565 523 630 523 645 540 740 555 830 560 950 572 1050 585 1160 595 1210 595 1233"/>
                  <path d="M643 25L680 110 735 275 750 370 770 450 775 500 797 560 808 645 820 760 830 920 847 1083 910 1150"/>
                  <path d="M980 285L985 370 997 450 1005 560 1008 645 1008 800 1006 880 1016 1000 1013 1030 1030 1028"/>
                  <path d="M27 970L70 820 93 757 135 785 165 835 180 850 245 930 262 965 290 1070 283 1165 255 1215 250 1227"/>
                </g>
                <path stroke="#35d98b" stroke-width="4" d="M42 30L60 25 670 25 705 42 772 84 830 125 905 190 940 228 980 285 1020 340 1060 420 1085 470 1102 520 1112 570 1118 645 1120 700 1119 790 1112 850 1095 905 1070 960 1030 1030 990 1080 940 1130 905 1152 850 1188 790 1210 660 1226 520 1243 400 1259 372 1262 320 1247 250 1227 190 1212 170 1208 60 1207 25 1178 27 720 28 645 31 500 32 300 34 70z"/>
            </g>
            <path d="M679.500 556h10v10h-10zM684 568.500l7 7-7 7-7-7z" fill="#0ff"/>
            <path d="M694 575h3M698 573v4h3M703 573l2 4M706 573h3v3" stroke="#c05a5a"/>
            <g stroke="#e6e6e6"><path d="M271.500 527v45M276 575.500h45M267.500 571.500h8v8h-8zM271.500 571v5h5M273 510l6 6 6-6M279.500 516v6M326 563l12 12M338 563l-12 12"/></g>
            <g stroke="#ddd"><circle cx="267" cy="176" r="2.500"/><path d="M266 179v7M271 175h6v3h-6M264 183h6M272 183l3-3 3 3v4h-6z"/></g>
            <circle cx="1184" cy="226" r="42" stroke="#41474e" stroke-width="9"/>
            <rect x="1190" y="281" width="26" height="16" rx="3" fill="#8b9095"/>
            <text x="1226" y="231" font-size="13" font-weight="bold" text-anchor="middle" fill="#a9adb1">E</text>
            <path d="M1207 163.500h5v6h-5" stroke="#ddd"/><path d="M1224 162.500l7 8M1231 162.500l-7 8" stroke="#fff" stroke-width="2"/>
          </svg>
          <div class="vlabel position-absolute text-light">[−] [Top] [2D Wireframe]</div>
          <div class="nav3 position-absolute d-flex flex-column align-items-center gap-2">
            <button aria-label="Wheel"><svg class="ic" viewBox="0 0 24 24"><rect x="2" y="2" width="20" height="20" rx="7"/><circle cx="12" cy="12" r="6"/></svg></button>
            <span class="caret"></span>
            <button aria-label="Pan"><svg class="ic" viewBox="0 0 24 24"><path d="M6 22l-5-9 3-1 3 4V5l3-1v8V2h3v10V3h3v10l1-8 3 1v10l-3 6z"/></svg></button>
            <button aria-label="Zoom"><svg class="ic" viewBox="0 0 24 24"><path d="M2 3l12 12M14 3L2 15M19 20l4 4"/><circle cx="16" cy="17" r="4"/></svg></button>
            <span class="caret"></span>
            <button aria-label="Orbit"><svg class="ic" viewBox="0 0 24 24"><ellipse cx="12" cy="12" rx="11" ry="4"/><ellipse cx="12" cy="12" rx="4" ry="11"/></svg></button>
            <span class="caret"></span>
            <button aria-label="Show motion"><svg class="ic" viewBox="0 0 24 24"><path d="M1 2h22v6H1zM6 2v6M12 2v6M18 2v6M2 10h16v12H2zM8 13l5 3-5 3z"/></svg></button>
          </div>
        </div>
        <div class="mtabs d-flex">
          <button class="nv" aria-label="First"><span style="border-left:1px solid #777;padding-left:1px"><b class="lf d-block" style="border-right-color:#777"></b></span></button><button class="nv" aria-label="Previous"><b class="lf" style="border-right-color:#777"></b></button><button class="nv" aria-label="Next"><b class="rt" style="border-left-color:#777"></b></button><button class="nv" aria-label="Last"><span style="border-right:1px solid #777;padding-right:1px"><b class="rt d-block" style="border-left-color:#777"></b></span></button>
          <button class="mt on">Model</button><button class="mt sl" style="padding-left:4px">Layout1</button><button class="mt sl">Layout2</button>
        </div>
      </div>
      <div class="side d-flex flex-column align-items-center">
        <div class="grip align-self-stretch"></div>
        <button aria-label="Angle distance"><svg class="ic"><use href="#ang2"/></svg></button>
        <button aria-label="Bearing distance"><svg class="ic"><use href="#ang"/></svg></button>
        <button aria-label="Azimuth distance"><svg class="ic"><use href="#deltac"/></svg></button>
        <button aria-label="Deflection distance"><svg class="ic"><use href="#defl"/></svg></button>
        <button aria-label="Northing easting"><svg class="ic"><use href="#sheet"/></svg></button>
        <button aria-label="Grid northing"><svg class="ic"><use href="#globe"/></svg></button>
        <button aria-label="Latitude longitude"><svg class="ic"><use href="#globe2"/></svg></button>
        <button aria-label="Point number"><svg class="ic"><use href="#ptn"/></svg></button>
        <button aria-label="Point name"><svg class="ic"><use href="#pta"/></svg></button>
        <button aria-label="Point object"><svg class="ic"><use href="#ptc"/></svg></button>
        <button aria-label="Zoom to point"><svg class="ic"><use href="#ptz"/></svg></button>
        <button aria-label="Side shot"><svg class="ic"><use href="#kite"/></svg></button>
        <button aria-label="Station offset"><svg class="ic"><use href="#curve"/></svg></button>
        <hr>
        <button aria-label="Create points"><svg class="ic"><use href="#ptz"/></svg></button>
        <hr>
        <button aria-label="Station"><svg class="ic"><use href="#sta"/></svg></button>
        <button aria-label="Surface station"><svg class="ic"><use href="#sta2"/></svg></button>
        <button aria-label="Point station"><svg class="ic"><use href="#sta3"/></svg></button>
        <hr>
        <button aria-label="Profile station"><svg class="ic"><use href="#ortho"/></svg></button>
        <button aria-label="Profile grade"><svg class="ic"><use href="#ortho2"/></svg></button>
        <button aria-label="Profile elevation"><svg class="ic"><use href="#ortho"/></svg></button>
      </div>
    </div>
    <div class="cmd d-flex">
      <div class="cmdgrip"><div class="grip"></div></div>
      <div class="flex-grow-1">
<pre>Command: *Cancel*
Command:   &lt;Switching to: Model&gt;
Regenerating model.
Command: Specify opposite corner or [Fence/WPolygon/CPolygon]:</pre>
        <label class="d-flex">Command:<input class="flex-grow-1" type="text"></label>
      </div>
    </div>
  </div>
</main>

<footer class="status d-flex">
  <button class="st" style="margin-left:242px" aria-label="Infer constraints"><svg class="ic"><path d="M0 5h10M5 1v12M8 10h6M11 7v7M12 8h3v3h-3z"/></svg></button>
  <button class="st" aria-label="Snap"><svg class="ic"><path d="M2 4h9M2 8h9M2 12h9" stroke-dasharray="1 2"/><path d="M14 3v11M3 13.500h8"/></svg></button>
  <button class="st" aria-label="Grid"><svg class="ic"><use href="#grid"/></svg></button>
  <button class="st" aria-label="Ortho"><svg class="ic"><path d="M3 1v13h12M3 9h5v5" stroke="#777"/></svg></button>
  <button class="st on" aria-label="Polar"><svg class="ic"><circle cx="6" cy="9" r="4.500"/><path d="M2 9h13M6 9l7-6M10 6v3"/></svg></button>
  <button class="st on" aria-label="Object snap"><svg class="ic"><path d="M3 3h11v12H3z" fill="#eee"/><circle cx="3" cy="3" r="2" stroke="#d33" fill="#fff"/></svg></button>
  <button class="st on" aria-label="3D snap"><svg class="ic"><path d="M2 5l4-4h9v9l-4 4H2z" fill="#eee"/><circle cx="3" cy="14" r="2" stroke="#d33" fill="#fff"/></svg></button>
  <button class="st on" aria-label="Tracking"><svg class="ic"><path d="M12 2L3 12h11"/></svg></button>
  <button class="st on" aria-label="Dynamic UCS"><svg class="ic"><path d="M2 1v13h13M2 14L9 7M1 3l1-2 1 2"/><path d="M12 1l-3 5h3l-2 4 5-6h-3z" fill="#f7b733" stroke="#b47911"/></svg></button>
  <button class="st" aria-label="Dynamic input"><svg class="ic"><path d="M1 8h8M5 4v8M9 9h6v5H9z"/></svg></button>
  <button class="st" aria-label="Lineweight"><svg class="ic"><path d="M8 9h6"/><path d="M1 9h6M8 2v12" stroke-width="2"/></svg></button>
  <button class="st on" aria-label="Transparency"><svg class="ic"><path d="M1 1h14v14H1z" fill="#8fc0ee" stroke="#246da4"/><path d="M2 5h12M2 9h12M2 13h12" stroke="#fff" stroke-dasharray="2 2"/></svg></button>
  <button class="st" aria-label="Quick properties"><svg class="ic"><path d="M4.500 3.500h8v10h-8z" fill="#fff"/><path d="M6 6h5M6 8.500h5M6 11h5" stroke-dasharray="1 1"/></svg></button>
  <button class="st on" aria-label="Selection cycling"><svg class="ic"><path d="M1 4h6M4 1v6"/><path d="M5 5h6v6H5z" fill="#eee"/><path d="M9 9h6v6H9z" fill="#4caf50"/></svg></button>
  <button class="st txt ms-auto">MODEL</button>
  <button class="st" aria-label="Quick view layouts"><svg class="ic"><path d="M2 1h12v11H2z" fill="#eee"/><path d="M5 3v6h5z"/><path d="M1 14h14" stroke-width="2"/></svg></button>
  <button class="st" aria-label="Quick view drawings"><svg class="ic"><path d="M.5 2.500h7v6h-7zM8.500 2.500h7v6h-7z" fill="#eee"/><path d="M0 12h16" stroke-width="2"/></svg></button>
  <span style="width:12px"></span>
  <button class="st border-0" aria-label="Annotation scale"><svg class="ic"><use href="#ann"/></svg></button>
  <button class="st txt gap-1 px-0 pe-1">1" = 30'<span class="caret caret-lg" style="border-top-color:#111"></span></button>
  <button class="st" aria-label="Annotation visibility"><svg class="ic"><use href="#ann"/><circle cx="13" cy="9" r="2.500" fill="#ffc83d" stroke="#d99a1a"/></svg></button>
  <button class="st" aria-label="Auto scale"><svg class="ic" opacity=".5"><use href="#ann"/></svg></button>
  <span style="width:6px"></span>
  <button class="st" aria-label="Workspace"><svg class="ic"><circle cx="8" cy="8" r="6" fill="#f2f2f2" stroke="none"/><use href="#gear"/></svg></button>
  <button class="st" aria-label="Lock toolbars"><svg class="ic"><path d="M2 7h8v8H2z" fill="#eee"/><path d="M9 7V4q0-3 3-3t3 3v2M6 9v4"/></svg></button>
  <button class="st" aria-label="Hardware acceleration"><svg class="ic"><path d="M1 3h12v6H1z" fill="#6d7d92"/><path d="M3 1v2M6 1v2M9 1v2M3 9v2M6 9v2"/><circle cx="12" cy="11" r="3" fill="#8ec7ef" stroke="#468"/></svg></button>
  <button class="st in" style="width:26px" aria-label="Isolate objects"><svg class="ic"><path d="M1 2h11v11H1z" fill="#eee"/><path d="M5 5h3v5H5z"/><path d="M9 9h6v5H9z" fill="#f3b62e" stroke="#8a6210"/></svg></button>
  <button class="st in" aria-label="Hidden objects"><svg class="ic"><use href="#bulb"/></svg></button>
  <button class="st" style="width:16px" aria-label="Status menu"><span class="caret caret-lg" style="border-top-color:#111"></span></button>
  <button class="st" aria-label="Clean screen"><svg class="ic"><path d="M2.500 2.500h12v11h-12z" fill="#eee"/><path d="M2 4h13" stroke-width="2"/></svg></button>
</footer>
</div>

<script src="https://cdn.jsdelivr.net/npm/bootstrap@5.3.0/dist/js/bootstrap.bundle.min.js"></script>
</body>
</html>
